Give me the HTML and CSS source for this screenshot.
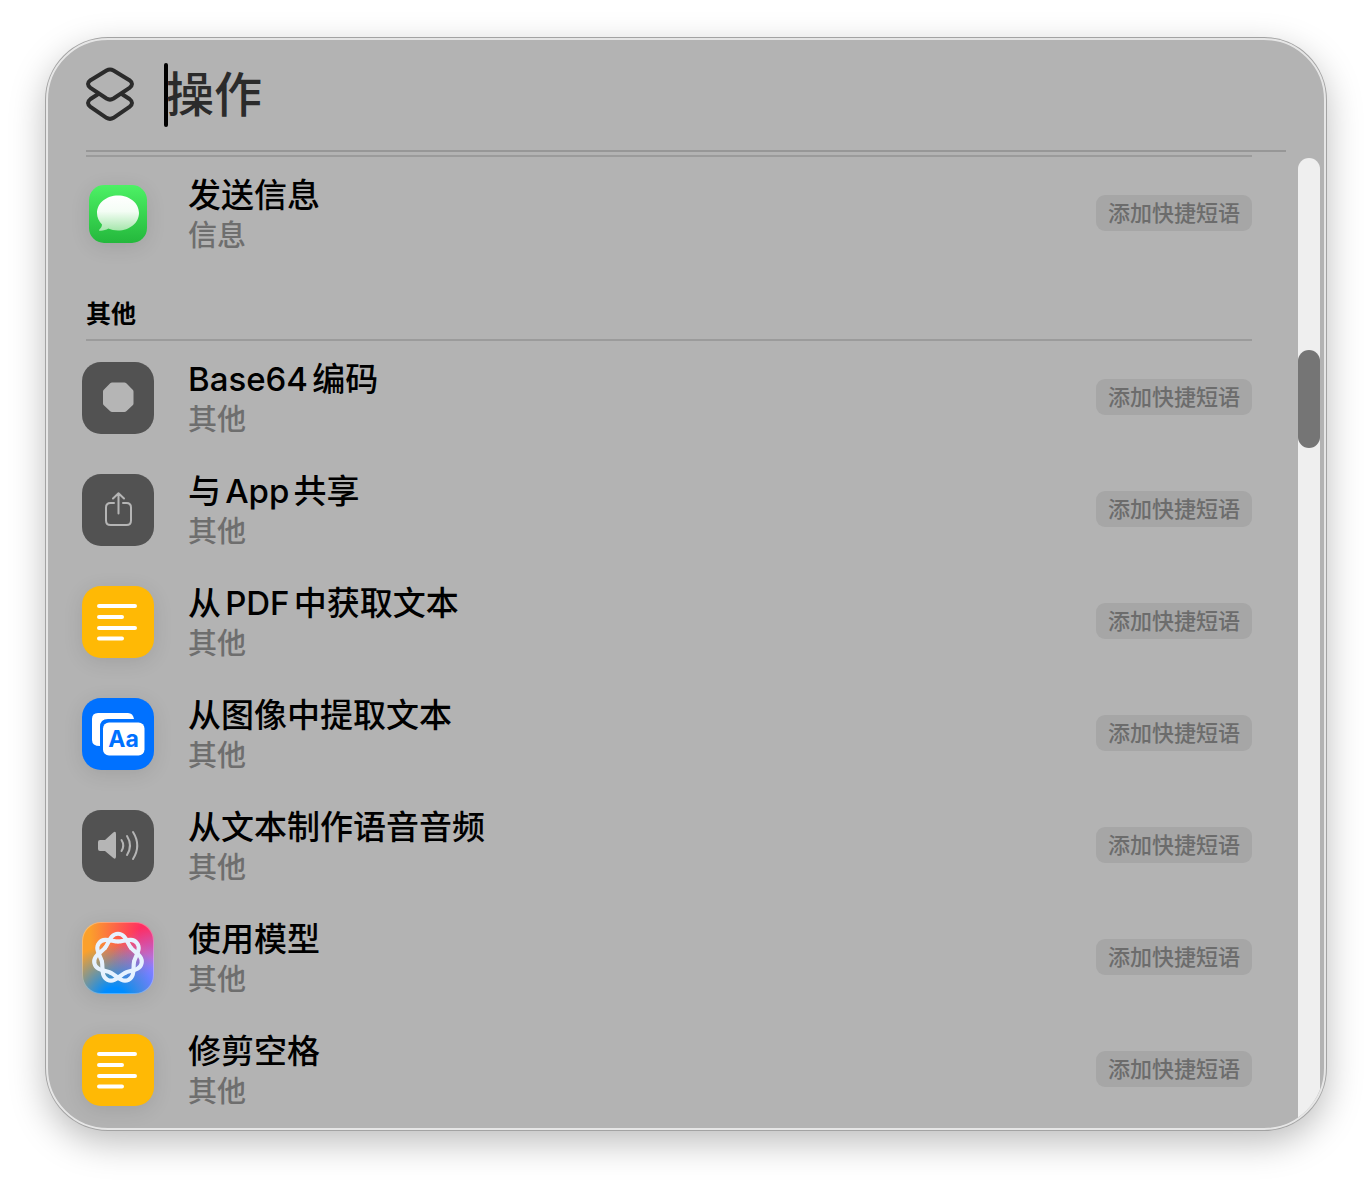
FILE: index.html
```html
<!DOCTYPE html>
<html lang="zh-CN">
<head>
    <meta charset="UTF-8">
    <meta name="viewport" content="width=device-width, initial-scale=1.0">
    <title>操作</title>
    <link rel="stylesheet" href="styles.css">
</head>
<body>

    <div class="panel">
        <div class="search">
            <svg class="search-icon" viewBox="0 0 48 56" aria-hidden="true">
                <path d="M20.500 3.500Q24 1.500 27.500 3.500L43.500 13.200Q48.500 17 43.500 20.800L27.500 31.500Q24 33.700 20.500 31.500L4.500 20.800Q-.5 17 4.500 13.200Z"/>
                <path d="M11.500 27.500L4.500 32Q-.5 36 4.500 39.800L20.500 50.800Q24 53 27.500 50.800L43.500 39.800Q48.500 36 43.500 32L36.500 27.500"/>
            </svg>
            <span class="caret"></span>
            <input type="text" class="search-input" placeholder="操作" aria-label="操作">
        </div>

        <div class="results">
            <div class="list">
                <ul class="group">
                    <li class="row">
                        <div class="icon icon-small messages">
                            <svg viewBox="0 0 58 58" aria-hidden="true">
                                <defs>
                                    <linearGradient id="bubble" x1="0" y1="0" x2="0" y2="1">
                                        <stop offset="0" stop-color="#fff"/>
                                        <stop offset="0.450" stop-color="#f4fdf5"/>
                                        <stop offset="1" stop-color="#a5e6ab"/>
                                    </linearGradient>
                                </defs>
                                <path fill="url(#bubble)" d="M29 10.500C40.500 10.500 50 18 50 28S40.500 45.500 29 45.500C25.500 45.500 22 44.800 19.300 43.600C17 45.200 13.500 46 10.600 45.700C9.800 45.600 9.800 45 10.400 44.500C12 43.200 12.900 41.500 13 39.600C9.900 36.500 8 32.500 8 28C8 18 17.500 10.500 29 10.500Z"/>
                            </svg>
                        </div>
                        <div class="info">
                            <p class="name">发送信息</p>
                            <p class="app">信息</p>
                        </div>
                        <button type="button" class="add">添加快捷短语</button>
                    </li>
                </ul>

                <h2 class="heading">其他</h2>
                <ul>
                    <li class="row">
                        <div class="icon gray">
                            <svg viewBox="0 0 72 72" aria-hidden="true">
                                <path fill="#b5b5b5" d="M30 20.500H42.500Q43.500 20.500 44.300 21.300L50.700 27.700Q51.500 28.500 51.500 29.500V41.500Q51.500 42.500 50.700 43.300L44.300 49.200Q43.500 50 42.500 50H30Q29 50 28.200 49.200L21.800 43.300Q21 42.500 21 41.500V29.500Q21 28.500 21.800 27.700L28.200 21.300Q29 20.500 30 20.500Z"/>
                            </svg>
                        </div>
                        <div class="info">
                            <p class="name">Base64编码</p>
                            <p class="app">其他</p>
                        </div>
                        <button type="button" class="add">添加快捷短语</button>
                    </li>
                    <li class="row">
                        <div class="icon gray">
                            <svg viewBox="0 0 72 72" aria-hidden="true">
                                <path class="thin" d="M32 29H28.500Q24 29 24 33.500V46.500Q24 51 28.500 51H44.500Q49 51 49 46.500V33.500Q49 29 44.500 29H41M36.500 39.500V19.500M31 24.500L36.500 19.200L42 24.500"/>
                            </svg>
                        </div>
                        <div class="info">
                            <p class="name">与App共享</p>
                            <p class="app">其他</p>
                        </div>
                        <button type="button" class="add">添加快捷短语</button>
                    </li>
                    <li class="row">
                        <div class="icon yellow">
                            <svg viewBox="0 0 72 72" aria-hidden="true">
                                <path id="lines" class="lines" d="M17 20H53M17 31H40M17 42H53M17 52.500H40"/>
                            </svg>
                        </div>
                        <div class="info">
                            <p class="name">从PDF中获取文本</p>
                            <p class="app">其他</p>
                        </div>
                        <button type="button" class="add">添加快捷短语</button>
                    </li>
                    <li class="row">
                        <div class="icon blue">
                            <svg viewBox="0 0 72 72" aria-hidden="true">
                                <path fill="#fff" d="M16 15H46Q51 15 52 21H26Q18 21 18 29V48Q10 48 10 42V21Q10 15 16 15Z"/>
                                <rect x="21" y="24.500" width="41.500" height="33" rx="6" fill="#fff"/>
                                <text x="41.500" y="49" class="aa">Aa</text>
                            </svg>
                        </div>
                        <div class="info">
                            <p class="name">从图像中提取文本</p>
                            <p class="app">其他</p>
                        </div>
                        <button type="button" class="add">添加快捷短语</button>
                    </li>
                    <li class="row">
                        <div class="icon gray">
                            <svg viewBox="0 0 72 72" aria-hidden="true">
                                <path fill="#b5b5b5" d="M18 30H23L31 22.700Q34 20.500 34 24V46.500Q34 50 31 47.800L23 41H18Q16 41 16 39V32Q16 30 18 30Z"/>
                                <path class="thin" d="M39.500 30Q43 35.500 39.500 41M45 26Q51 35.500 45 45M51 22Q59.500 35.500 51 49"/>
                            </svg>
                        </div>
                        <div class="info">
                            <p class="name">从文本制作语音音频</p>
                            <p class="app">其他</p>
                        </div>
                        <button type="button" class="add">添加快捷短语</button>
                    </li>
                    <li class="row">
                        <div class="icon model">
                            <svg viewBox="-34 -34 68 68" aria-hidden="true">
                                <g class="knot">
                                    <path id="petal" d="M-12.500 -10C-9 -14.300 -7.500 -23.500 0 -23.500S9 -14.300 12.500 -10"/>
                                    <use href="#petal" transform="rotate(51.430)"/>
                                    <use href="#petal" transform="rotate(102.860)"/>
                                    <use href="#petal" transform="rotate(154.290)"/>
                                    <use href="#petal" transform="rotate(205.710)"/>
                                    <use href="#petal" transform="rotate(257.140)"/>
                                    <use href="#petal" transform="rotate(308.570)"/>
                                </g>
                            </svg>
                        </div>
                        <div class="info">
                            <p class="name">使用模型</p>
                            <p class="app">其他</p>
                        </div>
                        <button type="button" class="add">添加快捷短语</button>
                    </li>
                    <li class="row">
                        <div class="icon yellow">
                            <svg viewBox="0 0 72 72" aria-hidden="true">
                                <use href="#lines"/>
                            </svg>
                        </div>
                        <div class="info">
                            <p class="name">修剪空格</p>
                            <p class="app">其他</p>
                        </div>
                        <button type="button" class="add">添加快捷短语</button>
                    </li>
                </ul>
            </div>
            <div class="scrollbar">
                <div class="thumb"></div>
            </div>
        </div>
    </div>

</body>
</html>
```
FILE: styles.css
```css
* {
    box-sizing: border-box;
}
body {
    margin: 0;
    padding: 38px 46px 54px;
    background: white;
    font-family: Inter, "Noto Sans CJK SC", sans-serif;
    color: black;
}
ul, p, h2 {
    margin: 0;
    padding: 0;
    list-style: none;
}
.panel {
    background: #b3b3b3;
    border: 2px solid #e6e6e6;
    border-radius: 62px;
    overflow: hidden;
    box-shadow: 0 0 0 1px #a3a3a3, 0 12px 36px rgba(0, 0, 0, 0.27);
}

/* search field */
.search {
    display: flex;
    align-items: center;
    height: 112px;
    margin: 0 38px;
    border-bottom: 2px solid #979797;
}
.search-icon {
    width: 48px;
    height: 56px;
    margin-right: 30px;
    overflow: visible;
    fill: none;
    stroke: #2b2b2b;
    stroke-width: 4;
    stroke-linecap: round;
    stroke-linejoin: round;
}
.caret {
    width: 4px;
    height: 64px;
    margin-right: -2px;
    border-radius: 2px;
    background: black;
}
.search-input {
    flex: 1;
    min-width: 0;
    padding: 0;
    border: none;
    outline: none;
    background: none;
    font: 500 48px/72px Inter, "Noto Sans CJK SC", sans-serif;
}
.search-input::placeholder {
    color: #2b2b2b;
    opacity: 1;
}

/* results */
.results {
    display: flex;
}
.list {
    flex: 1;
    padding: 3px 46px 2px 34px;
}
.group {
    position: relative;
    padding-top: 3px;
}
.group::before {
    content: "";
    position: absolute;
    top: 0;
    left: 4px;
    right: 0;
    height: 2px;
    background: #9b9b9b;
}
.row {
    display: flex;
    align-items: center;
    height: 112px;
}
.heading {
    margin: 0 0 1px 4px;
    padding: 28px 0 9px;
    border-bottom: 2px solid #9b9b9b;
    font-size: 25px;
    line-height: 32px;
    font-weight: 700;
}
.info {
    flex: 1;
    margin-left: 34px;
    padding-top: 4px;
}
.name {
    font-size: 33px;
    line-height: 40px;
    font-weight: 500;
    text-autospace: normal;
}
.app {
    font-size: 29px;
    line-height: 42px;
    font-weight: 500;
    color: #6e6e6e;
}
.add {
    margin-bottom: 2px;
    padding: 0 12px;
    border: none;
    border-radius: 9px;
    background: #a6a6a6;
    color: #6c6c6c;
    font: 500 22px/36px Inter, "Noto Sans CJK SC", sans-serif;
}

/* icons */
.icon {
    width: 72px;
    height: 72px;
    border-radius: 19px;
}
.icon svg {
    display: block;
}
.icon-small {
    width: 58px;
    height: 58px;
    margin: 0 7px;
    border-radius: 15px;
}
.gray {
    background: #525252;
}
.messages, .yellow, .blue, .model {
    box-shadow: 0 4px 20px rgba(0, 0, 0, 0.1);
}
.messages {
    background: linear-gradient(#4df165, #24b83c);
}
.yellow {
    background: #ffb905;
}
.blue {
    background: #0071ff;
}
.model {
    border: 1px solid rgba(255, 255, 255, 0.3);
    background:
        radial-gradient(circle at 45% 110%, #008cff 15%, rgba(0, 140, 255, 0) 65%),
        radial-gradient(circle at 105% 75%, #a27bff 10%, rgba(162, 123, 255, 0) 55%),
        radial-gradient(circle at 100% 15%, #ff2d62 15%, rgba(255, 45, 98, 0) 68%),
        #fba02b;
    background-origin: border-box;
}
.thin {
    fill: none;
    stroke: #b5b5b5;
    stroke-width: 2;
    stroke-linecap: round;
    stroke-linejoin: round;
}
.lines {
    stroke: white;
    stroke-width: 4;
    stroke-linecap: round;
}
.aa {
    fill: #0071ff;
    font: 700 23px Inter, sans-serif;
    text-anchor: middle;
}
.knot {
    fill: none;
    stroke: #e6f2ff;
    stroke-width: 4;
    stroke-linecap: round;
}

/* scrollbar */
.scrollbar {
    width: 22px;
    margin: 6px 4px 0 0;
    padding-top: 192px;
    border-radius: 11px;
    background: #efefef;
}
.thumb {
    height: 98px;
    border-radius: 11px;
    background: #757575;
}
```
